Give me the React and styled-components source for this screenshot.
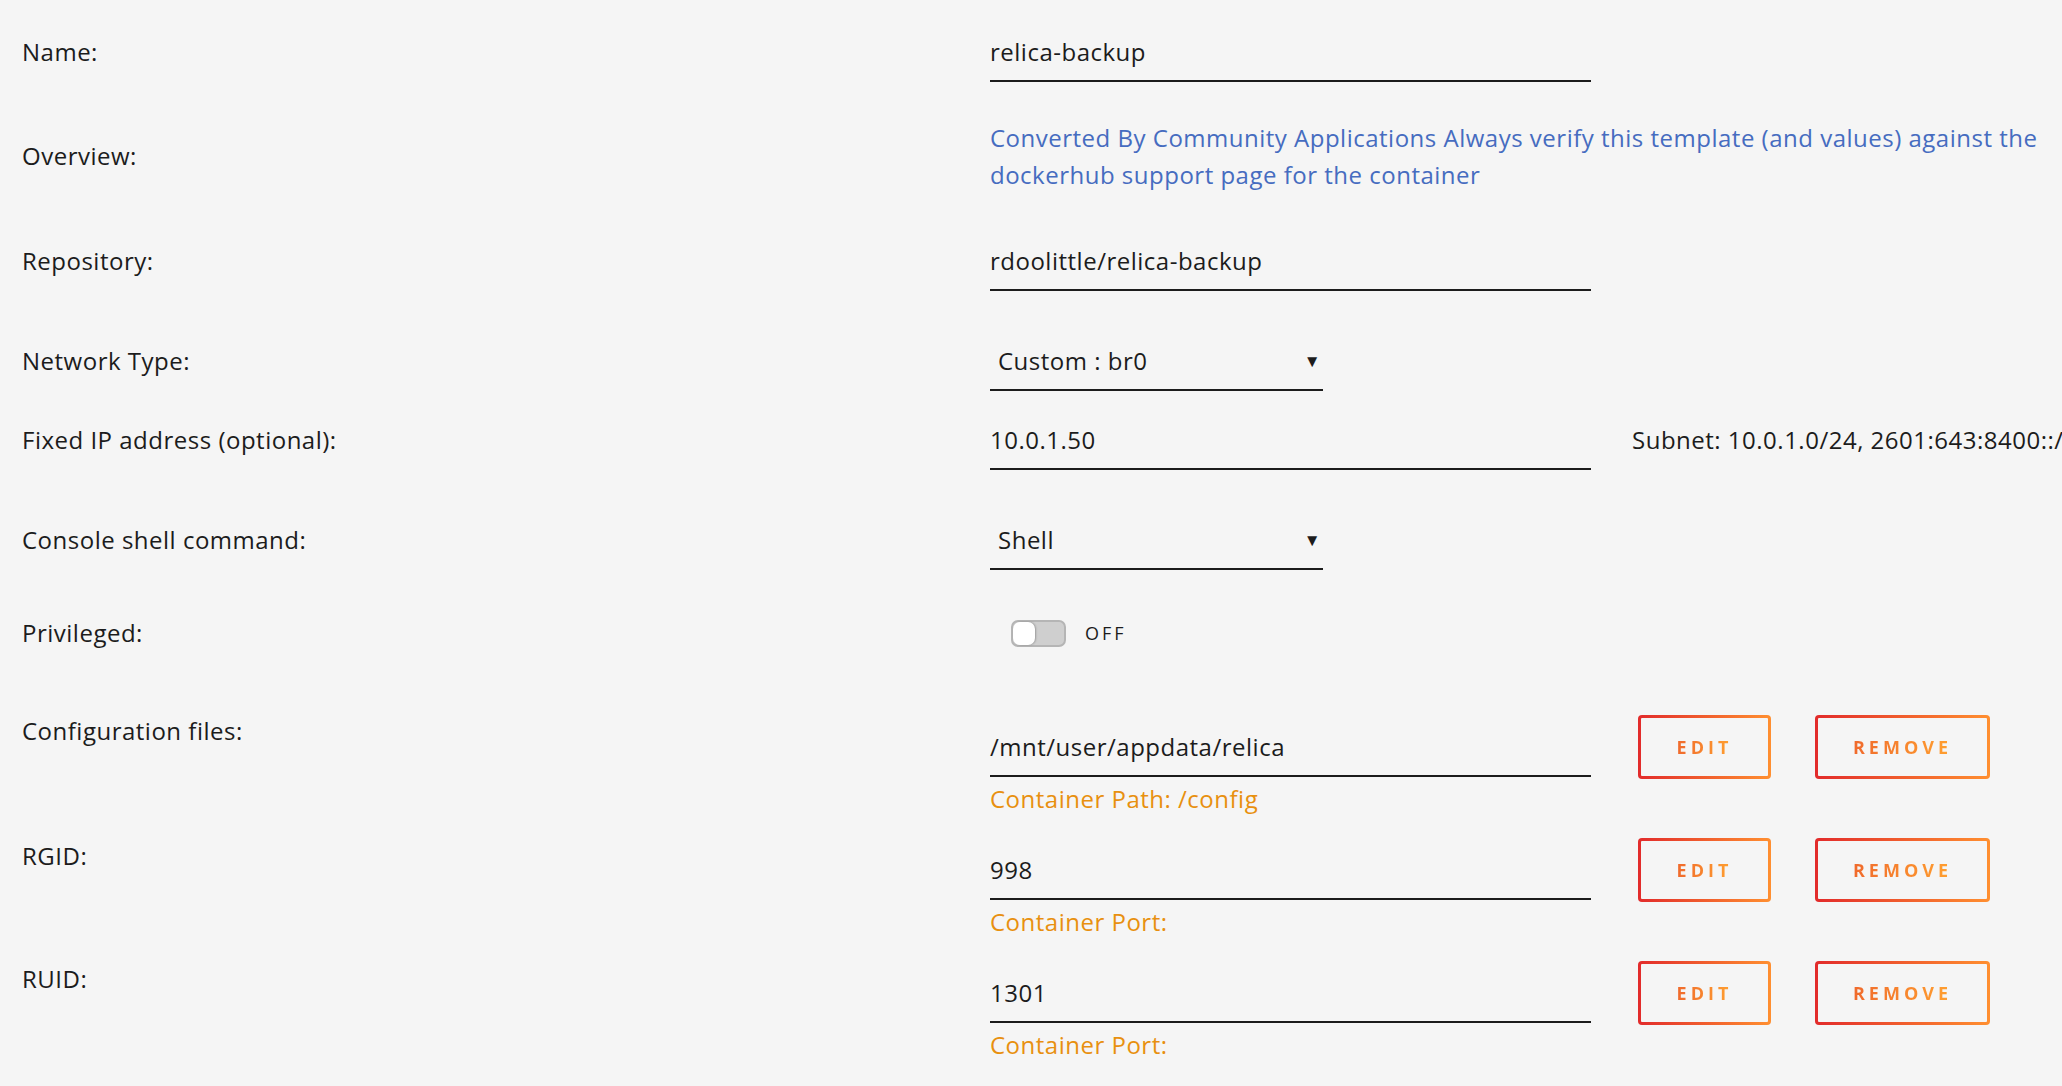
import styled, { createGlobalStyle } from 'styled-components';

const Global = createGlobalStyle`
  html, body { margin: 0; background: #f5f5f5; }
  body { font-family: "Open Sans", "Noto Sans", sans-serif; color: #1c1c1c; overflow: hidden; }
`;

const Page = styled.div`
  display: flex;
  flex-direction: column;
  padding-left: 22px;
  width: 2062px;
  height: 1086px;
  box-sizing: border-box;
  font-size: 24px;
  letter-spacing: 0.5px;
`;

const Row = styled.div`
  display: grid;
  grid-template-columns: 968px 601px 1fr;
  align-items: start;
  margin-top: ${p => p.$top}px;
`;

const Label = styled.div`
  line-height: 44px;
  margin-top: ${p => p.$shift || 0}px;
`;

const Input = styled.div`
  line-height: 44px;
  padding-bottom: 6px;
  border-bottom: 2px solid #1c1c1c;
  white-space: nowrap;
`;

const Select = styled(Input)`
  width: 333px;
  box-sizing: border-box;
  padding-left: 8px;
  padding-right: 2px;
  display: flex;
  justify-content: space-between;
  span { font-size: 17px; }
`;

const Overview = styled.div`
  grid-column: 2 / 4;
  width: 1070px;
  color: #466cc0;
  line-height: 37px;
`;

const Side = styled.div`
  padding-left: 41px;
  line-height: 44px;
  white-space: nowrap;
`;

const Note = styled.div`
  color: #e8900f;
  line-height: 26px;
  margin-top: 9px;
`;

const Buttons = styled.div`
  display: flex;
  gap: 44px;
  margin-left: 47px;
  margin-top: -10px;
`;

const Button = styled.button`
  width: ${p => p.$w}px;
  height: 64px;
  border: 3px solid transparent;
  border-radius: 4px;
  background: linear-gradient(#f5f5f5, #f5f5f5) padding-box,
    linear-gradient(90deg, #e22b2b, #ff8f30) border-box;
  font-family: "Open Sans", sans-serif;
  font-weight: 700;
  font-size: 18px;
  letter-spacing: 4px;
  color: #f47c2c;
  padding: 0;
  span {
    background: linear-gradient(90deg, #f06a2c, #ffa030);
    -webkit-background-clip: text;
    background-clip: text;
    color: transparent;
  }
`;

const Toggle = styled.div`
  display: flex;
  align-items: center;
  gap: 19px;
  margin-left: 21px;
  height: 44px;
  font-size: 18px;
  letter-spacing: 3px;
`;

const Track = styled.div`
  width: 51px;
  height: 23px;
  border-radius: 7px;
  border: 2px solid #b5b5b5;
  background: #cfcfcf;
  display: flex;
  align-items: center;
  i {
    width: 22px;
    height: 23px;
    border-radius: 7px;
    background: #fff;
    box-shadow: 1px 0 2px rgba(0,0,0,.25);
  }
`;

const ActionButtons = () => (
  <Buttons>
    <Button $w={133}><span>EDIT</span></Button>
    <Button $w={175}><span>REMOVE</span></Button>
  </Buttons>
);

export default function App() {
  return (
    <Page>
      <Global />
      <Row $top={30}><Label>Name:</Label><Input>relica-backup</Input></Row>
      <Row $top={37}>
        <Label style={{ lineHeight: '74px' }}>Overview:</Label>
        <Overview>Converted By Community Applications Always verify this template (and values) against the dockerhub support page for the container</Overview>
      </Row>
      <Row $top={46}><Label>Repository:</Label><Input>rdoolittle/relica-backup</Input></Row>
      <Row $top={48}><Label>Network Type:</Label><div><Select>Custom : br0<span>▼</span></Select></div></Row>
      <Row $top={27}>
        <Label>Fixed IP address (optional):</Label>
        <Input>10.0.1.50</Input>
        <Side>Subnet: 10.0.1.0/24, 2601:643:8400::/64</Side>
      </Row>
      <Row $top={48}><Label>Console shell command:</Label><div><Select>Shell<span>▼</span></Select></div></Row>
      <Row $top={41}>
        <Label>Privileged:</Label>
        <Toggle><Track><i /></Track>OFF</Toggle>
      </Row>
      <Row $top={70}>
        <Label $shift={-16}>Configuration files:</Label>
        <div><Input>/mnt/user/appdata/relica</Input><Note>Container Path: /config</Note></div>
        <ActionButtons />
      </Row>
      <Row $top={36}>
        <Label $shift={-14}>RGID:</Label>
        <div><Input>998</Input><Note>Container Port:</Note></div>
        <ActionButtons />
      </Row>
      <Row $top={36}>
        <Label $shift={-14}>RUID:</Label>
        <div><Input>1301</Input><Note>Container Port:</Note></div>
        <ActionButtons />
      </Row>
    </Page>
  );
}
